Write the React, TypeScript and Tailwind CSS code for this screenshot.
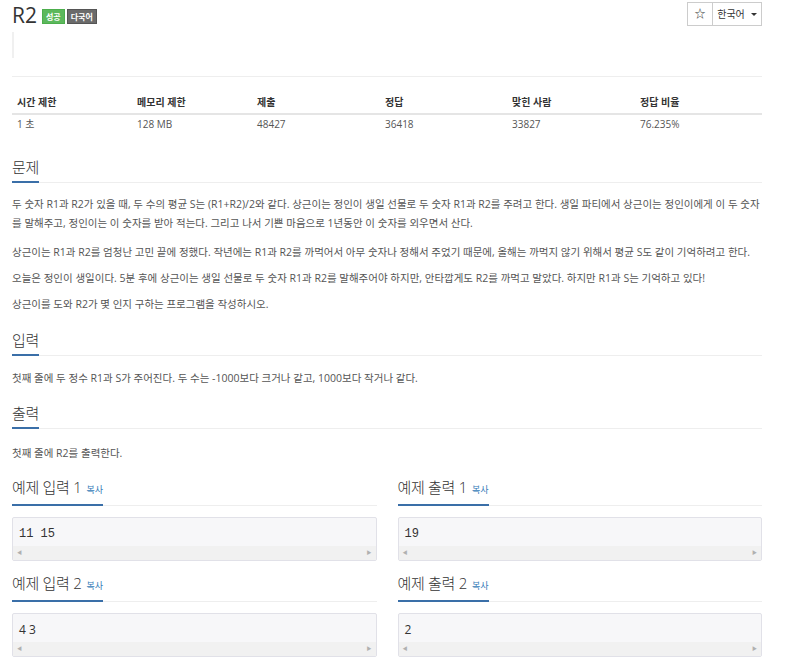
import React from 'react';

const font = { fontFamily: '"Open Sans", "Noto Sans CJK KR", sans-serif' };

const stats = [
  { label: '시간 제한', value: '1 초', w: 'w-[120px]' },
  { label: '메모리 제한', value: '128 MB', w: 'w-[120px]' },
  { label: '제출', value: '48427', w: 'w-[128px]' },
  { label: '정답', value: '36418', w: 'w-[127px]' },
  { label: '맞힌 사람', value: '33827', w: 'w-[128px]' },
  { label: '정답 비율', value: '76.235%', w: 'w-[127px]' },
];

function Headline({ title, copy }: { title: string; copy?: boolean }) {
  return (
    <div className="border-b border-[#eeeeee] flex">
      <h2 className="text-[15px] leading-[22px] text-[#333] font-light border-b-2 border-[#3a6fa8] -mb-px pb-[3px] flex items-baseline tracking-[-0.3px]">
        {title}
        {copy && <span className="ml-[5px] text-[9px] font-normal tracking-normal text-[#337ab7]">복사</span>}
      </h2>
    </div>
  );
}

function Sample({ text, mono }: { text: string; mono: boolean }) {
  return (
    <div className="mt-[11px] border border-[#e1e1e8] bg-[#f7f7f9] rounded-[2px]">
      <pre
        className={`px-[6px] pt-[7px] pb-[3px] text-[12px] leading-[18px] text-[#333] ${mono ? 'font-["Liberation_Mono",monospace]' : ''}`}
        style={mono ? undefined : font}
      >
        {text}
      </pre>
      <div className="h-[14px] bg-[#f1f1f1] flex items-center justify-between px-[4px]">
        <span className="text-[5px] text-[#b0b0b0]">◀</span>
        <span className="text-[5px] text-[#b0b0b0]">▶</span>
      </div>
    </div>
  );
}

export default function App() {
  return (
    <div className="bg-white w-[800px] h-[658px] overflow-hidden text-[#555]" style={font}>
      <div className="mx-[12px] w-[750px]">
        <div className="flex justify-between items-start">
          <div className="flex items-center pt-[2px]">
            <span className="text-[21px] leading-[26px] text-[#333]">R2</span>
            <span className="ml-[5px] bg-[#5cb85c] border border-[#4cae4c] text-white text-[8px] font-bold px-[3px] h-[15px] leading-[13px] mt-[3px]">성공</span>
            <span className="ml-[2px] bg-[#6b6b6b] border border-[#555] text-white text-[8px] font-bold px-[3px] h-[15px] leading-[13px] mt-[3px]">다국어</span>
          </div>
          <div className="flex mt-[2px]">
            <button className="w-[26px] h-[24px] border border-[#ccc] bg-white flex items-center justify-center text-[11px] text-[#333]">☆</button>
            <button className="-ml-px w-[50px] h-[24px] border border-[#ccc] bg-white flex items-center justify-center gap-[6px] text-[10px] text-[#333]">
              한국어
              <span className="border-x-[3px] border-x-transparent border-t-[3px] border-t-[#333]" />
            </button>
          </div>
        </div>

        <div className="mt-[4px] h-[26px] border-l-2 border-[#f0f0f0]" />
        <div className="mt-[18px] border-t border-[#eeeeee]" />

        <table className="mt-[15px] border-collapse text-[10px]">
          <thead>
            <tr className="border-b-2 border-[#e5e5e5]">
              {stats.map((s) => (
                <th key={s.label} className={`${s.w} text-left font-bold text-[#333] px-[5px] pt-[3px] pb-[4px] leading-[14px]`}>
                  {s.label}
                </th>
              ))}
            </tr>
          </thead>
          <tbody>
            <tr>
              {stats.map((s) => (
                <td key={s.label} className="px-[5px] pt-[2px] pb-[5px] leading-[14px]">{s.value}</td>
              ))}
            </tr>
          </tbody>
        </table>

        <section className="mt-[20px]">
          <Headline title="문제" />
          <div className="mt-[12px] text-[10.5px] leading-[19px] flex flex-col gap-[7px]">
            <p className="mb-[3px]">
              두 숫자 R1과 R2가 있을 때, 두 수의 평균 S는 (R1+R2)/2와 같다. 상근이는 정인이 생일 선물로 두 숫자 R1과 R2를 주려고 한다. 생일 파티에서 상근이는 정인이에게 이 두 숫자를 말해주고, 정인이는 이 숫자를 받아 적는다. 그리고 나서 기쁜 마음으로 1년동안 이 숫자를 외우면서 산다.
            </p>
            <p>
              상근이는 R1과 R2를 엄청난 고민 끝에 정했다. 작년에는 R1과 R2를 까먹어서 아무 숫자나 정해서 주었기 때문에, 올해는 까먹지 않기 위해서 평균 S도 같이 기억하려고 한다.
            </p>
            <p>
              오늘은 정인이 생일이다. 5분 후에 상근이는 생일 선물로 두 숫자 R1과 R2를 말해주어야 하지만, 안타깝게도 R2를 까먹고 말았다. 하지만 R1과 S는 기억하고 있다!
            </p>
            <p>상근이를 도와 R2가 몇 인지 구하는 프로그램을 작성하시오.</p>
          </div>
        </section>

        <section className="mt-[15px]">
          <Headline title="입력" />
          <p className="mt-[13px] text-[10.5px] leading-[19px]">
            첫째 줄에 두 정수 R1과 S가 주어진다. 두 수는 -1000보다 크거나 같고, 1000보다 작거나 같다.
          </p>
        </section>

        <section className="mt-[14px]">
          <Headline title="출력" />
          <p className="mt-[15px] text-[10.5px] leading-[19px]">첫째 줄에 R2를 출력한다.</p>
        </section>

        <div className="mt-[13px] grid grid-cols-2 gap-x-[21px] gap-y-[11px] w-[750px]">
          <div>
            <Headline title="예제 입력 1" copy />
            <Sample text="11 15" mono />
          </div>
          <div>
            <Headline title="예제 출력 1" copy />
            <Sample text="19" mono />
          </div>
          <div>
            <Headline title="예제 입력 2" copy />
            <Sample text="4 3" mono={false} />
          </div>
          <div>
            <Headline title="예제 출력 2" copy />
            <Sample text="2" mono={false} />
          </div>
        </div>
      </div>
    </div>
  );
}
